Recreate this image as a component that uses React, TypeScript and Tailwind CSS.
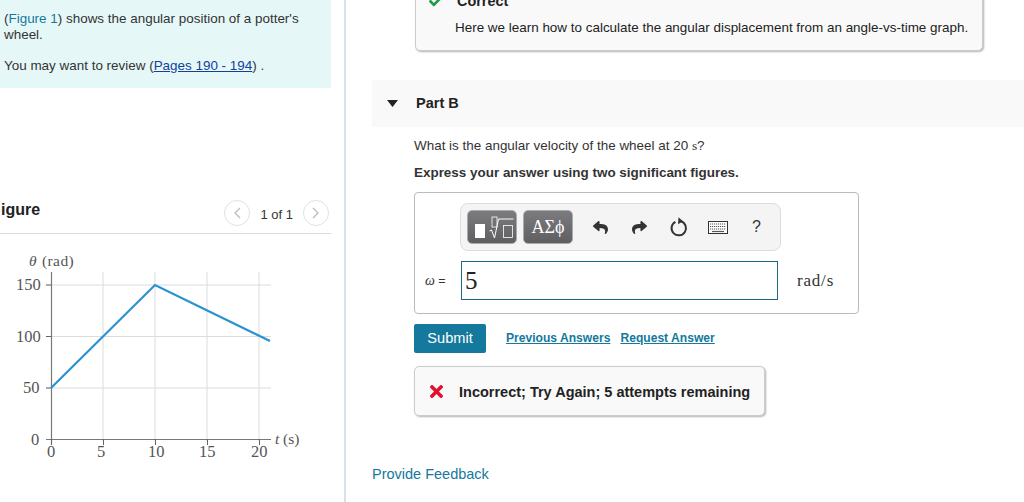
import { FaCheck, FaTimes, FaReply, FaShare } from "react-icons/fa";

const GRID_X = [51, 103, 155, 207, 259];
const GRID_Y = [285, 336.5, 388];
const serif = { fontFamily: "'Liberation Serif', serif" };

const Chart = () => {
  return (
    <svg width="320" height="225" viewBox="0 245 320 225" className="block">
      {GRID_X.slice(1).map((x) => (
        <line key={x} x1={x} x2={x} y1="272" y2="441" stroke="#dcdcdc" strokeWidth="1" />
      ))}
      {GRID_Y.map((y) => (
        <line key={y} x1="46" x2="271" y1={y} y2={y} stroke="#dcdcdc" strokeWidth="1" />
      ))}
      {GRID_Y.map((y) => (
        <line key={y} x1="46" x2="51" y1={y} y2={y} stroke="#666" strokeWidth="1" />
      ))}
      <line x1="51.5" x2="51.5" y1="272" y2="445" stroke="#777" strokeWidth="1.2" />
      <line x1="46" x2="271" y1="439.5" y2="439.5" stroke="#777" strokeWidth="1.2" />
      {GRID_X.map((x) => (
        <line key={x} x1={x + 0.5} x2={x + 0.5} y1="439" y2="445" stroke="#666" strokeWidth="1" />
      ))}
      <polyline points="51,388 155,285 270,341" fill="none" stroke="#2a92d0" strokeWidth="2.2" />
      <g style={serif} fontSize="16.5" fill="#555">
        <text x="29" y="266" fontStyle="italic" fontSize="15.5">θ</text>
        <text x="42" y="266" fontSize="15.5" letterSpacing="0.4">(rad)</text>
        <text x="16" y="290">150</text>
        <text x="16" y="342">100</text>
        <text x="23" y="393">50</text>
        <text x="31" y="445">0</text>
        <text x="47" y="457">0</text>
        <text x="97" y="457">5</text>
        <text x="148" y="457">10</text>
        <text x="199" y="457">15</text>
        <text x="251" y="457">20</text>
        <text x="275" y="444" fontStyle="italic" fontSize="15.5">t</text>
        <text x="283" y="444" fontSize="15.5">(s)</text>
      </g>
    </svg>
  );
};

const MatrixIcon = () => {
  return (
    <svg width="44" height="28" viewBox="0 0 44 28" fill="none">
      <rect x="5" y="11" width="10" height="14" fill="#fff" />
      <rect x="22" y="4" width="5" height="10" stroke="#fff" strokeWidth="0.8" />
      <path d="M19.5 18l2-1 3 8 4-19h15" stroke="#fff" strokeWidth="1" />
      <rect x="33.5" y="12.5" width="9" height="12" stroke="#fff" strokeWidth="0.8" />
    </svg>
  );
};

const ResetIcon = () => {
  return (
    <svg width="18" height="20" viewBox="0 0 20 22" fill="none">
      <path d="M6 5.2a8 8 0 1 0 6-.6" stroke="#333" strokeWidth="2.2" />
      <path d="M9.4 0.3l5 4.2-5.4 3.4z" fill="#333" />
    </svg>
  );
};

const KeyboardIcon = () => {
  return (
    <svg width="20" height="13" viewBox="0 0 20 13">
      <rect x="0.5" y="0.5" width="19" height="12" fill="#fff" stroke="#333" />
      <path d="M2 3h16M2 5.5h16M2 8h16" stroke="#555" strokeWidth="1.2" strokeDasharray="1.2 0.8" />
      <path d="M4 10.5h12" stroke="#555" strokeWidth="1.2" />
    </svg>
  );
};

const ToolButton = ({ children }: { children: React.ReactNode }) => {
  return (
    <div className="h-[34px] w-[50px] rounded-[5px] flex items-center justify-center bg-gradient-to-b from-[#7c7c80] to-[#5f5f62] border border-[#aaa]">
      {children}
    </div>
  );
};

const App = () => {
  return (
    <div className="h-[502px] w-[1024px] overflow-hidden flex bg-white font-['Liberation_Sans',Arial,sans-serif] text-[#333]">
      {/* left column */}
      <div className="w-[346px] h-full border-r-2 border-[#d5e2ef] shrink-0">
        <div className="w-[331px] h-[88px] bg-[#e6f7f8] pl-1 pt-[11px] text-[13.45px] leading-[16px]">
          <p>
            (<span className="text-[#14799c]">Figure 1</span>) shows the angular position of a potter's wheel.
          </p>
          <p className="mt-[15px]">
            You may want to review (<span className="text-[#12409c] underline">Pages 190 - 194</span>) .
          </p>
        </div>
        <div className="w-[331px] h-[146px] border-b border-[#d9d9d9] flex items-end justify-between pb-[7px]">
          <span className="font-bold text-[16px] leading-5 text-[#222] pl-[1px] mb-[6px]">igure</span>
          <div className="flex items-center gap-[10px] text-[13px] mr-[2px]">
            <span className="size-[26px] rounded-full border border-[#e2e2e2] flex items-center justify-center">
              <svg width="8" height="12" viewBox="0 0 8 12" fill="none">
                <path d="M7 1L2 6l5 5" stroke="#bbb" strokeWidth="1.3" />
              </svg>
            </span>
            <span className="mt-[4px]">1 of 1</span>
            <span className="size-[26px] rounded-full border border-[#e2e2e2] flex items-center justify-center">
              <svg width="8" height="12" viewBox="0 0 8 12" fill="none">
                <path d="M1 1l5 5-5 5" stroke="#bbb" strokeWidth="1.3" />
              </svg>
            </span>
          </div>
        </div>
        <div className="mt-[11px]">
          <Chart />
        </div>
      </div>

      {/* right column */}
      <div className="flex-1 pl-[26px]">
        <div className="ml-[43px] mr-[41px] mt-[-16px] h-[67px] bg-[#f9f9f9] rounded-[5px] border border-[#ccc] shadow-[1px_1px_2px_rgba(0,0,0,0.3)] pl-[15px] pt-[8px]">
          <div className="flex items-center gap-[15px] text-[14.4px] leading-4 font-bold text-[#222]">
            <FaCheck className="text-[#1d9a47] ml-[-2px]" size={13} />
            <span>Correct</span>
          </div>
          <p className="ml-[24px] mt-[9px] text-[13.45px] leading-5 text-[#222] whitespace-nowrap">
            Here we learn how to calculate the angular displacement from an angle-vs-time graph.
          </p>
        </div>

        <div className="mt-[29px] h-[47px] bg-[#f9f9f9] flex items-center pl-[15px]">
          <svg width="11" height="7" viewBox="0 0 11 7" className="mr-[18px]">
            <path d="M0 0h11L5.5 7z" fill="#222" />
          </svg>
          <span className="font-bold text-[14.5px] text-[#222]">Part B</span>
        </div>

        <div className="ml-[42px]">
          <p className="mt-[11px] text-[13.45px] leading-4 text-[#333]">
            What is the angular velocity of the wheel at 20 <span style={serif}>s</span>?
          </p>
          <p className="mt-[11px] text-[13.45px] leading-4 font-bold text-[#333]">
            Express your answer using two significant figures.
          </p>

          {/* answer box */}
          <div className="mt-[11px] w-[445px] h-[122px] border border-[#bbb] rounded-[4px] pt-[10px]">
            <div className="ml-[45px] w-[321px] h-[48px] bg-[#f4f4f4] border border-[#ddd] rounded-[8px] flex items-center pl-[6px] gap-[6px]">
              <ToolButton>
                <MatrixIcon />
              </ToolButton>
              <ToolButton>
                <span className="text-white text-[18px]" style={serif}>ΑΣϕ</span>
              </ToolButton>
              <div className="flex items-center text-[#333] ml-[14px]">
                <FaReply size={15} />
                <FaShare size={15} className="ml-[24px]" />
                <span className="ml-[23px]">
                  <ResetIcon />
                </span>
                <span className="ml-[20px]">
                  <KeyboardIcon />
                </span>
                <span className="ml-[24px] text-[16px]">?</span>
              </div>
            </div>
            <div className="flex items-center mt-[10px]">
              <span className="w-[46px] pl-[10px] text-[12.5px] whitespace-nowrap">
                <i style={serif} className="text-[14px]">ω</i> =
              </span>
              <div className="w-[317px] h-[39px] border border-[#1a6a85] pl-[3px] flex items-center text-[25px] text-[#222]" style={serif}>
                5
              </div>
              <span className="ml-[19px] text-[17px] tracking-[0.8px]" style={serif}>rad/s</span>
            </div>
          </div>

          <div className="mt-[10px] flex items-center">
            <div className="w-[72px] h-[29px] rounded-[2px] bg-[#14799c] text-white text-[14.6px] flex items-center justify-center">
              Submit
            </div>
            <span className="ml-[20px] text-[12.1px] font-bold text-[#14799c] underline">Previous Answers</span>
            <span className="ml-[10px] text-[12.1px] font-bold text-[#14799c] underline">Request Answer</span>
          </div>

          <div className="mt-[13px] w-[351px] h-[50px] bg-[#f9f9f9] rounded-[5px] border border-[#ccc] shadow-[1px_1px_2px_rgba(0,0,0,0.3)] flex items-center pl-[12px]">
            <FaTimes className="text-[#e0102f]" size={19} />
            <span className="ml-[13px] pt-[3px] font-bold text-[14.5px] text-[#222]">Incorrect; Try Again; 5 attempts remaining</span>
          </div>
        </div>

        <p className="mt-[50px] text-[14.5px] leading-4 text-[#14799c]">Provide Feedback</p>
      </div>
    </div>
  );
};

export default App;
